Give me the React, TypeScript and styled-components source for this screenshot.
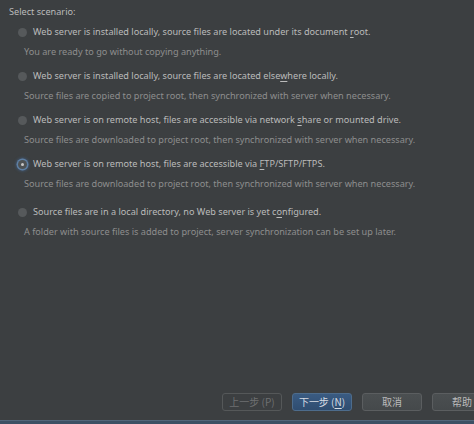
import React from "react";
import styled, { createGlobalStyle } from "styled-components";

const Global = createGlobalStyle`
  html, body { margin: 0; padding: 0; overflow: hidden; background: #3c3f41; }
  #root { height: 100vh; }
`;

const Dialog = styled.div`
  height: 100%;
  display: flex;
  flex-direction: column;
  background: #3c3f41;
  font-family: "Noto Sans", "Noto Sans CJK SC", sans-serif;
  font-size: 9.15px;
  color: #bbbbbb;
  overflow: hidden;
`;

const Content = styled.div`
  flex: 1;
  display: flex;
  flex-direction: column;
  padding: 2px 0 0 9px;
`;

const Title = styled.div`
  line-height: 20px;
`;

const Group = styled.div<{ $extra?: number }>`
  display: flex;
  flex-direction: column;
  margin-top: ${(p) => p.$extra ?? 0}px;
  margin-bottom: 4px;
`;

const OptionRow = styled.label`
  display: flex;
  align-items: center;
  gap: 6px;
  line-height: 20px;
  padding-left: 9px;
  white-space: nowrap;
  cursor: default;
`;

const Radio = styled.span<{ $checked?: boolean }>`
  box-sizing: border-box;
  width: 9px;
  height: 9px;
  border-radius: 50%;
  flex: none;
  background: ${(p) => (p.$checked ? "#4e5254" : "#56595b")};
  box-shadow: ${(p) =>
    p.$checked ? "0 0 0 1.5px #5e7fa3, 0 0 3px 2px rgba(70,110,160,0.6)" : "none"};
  display: flex;
  align-items: center;
  justify-content: center;
  &::after {
    content: "";
    display: ${(p) => (p.$checked ? "block" : "none")};
    width: 3px;
    height: 3px;
    border-radius: 50%;
    background: #c8c8c8;
  }
`;

const Desc = styled.div`
  line-height: 20px;
  padding-left: 15px;
  white-space: nowrap;
  color: #8e8e8e;
`;

const U = styled.span`
  text-decoration: underline;
  text-underline-offset: 2px;
`;

const ButtonBar = styled.div`
  display: flex;
  justify-content: flex-end;
  gap: 10px;
  margin-right: -18px;
  padding-bottom: 9px;
`;

const Button = styled.button<{ $variant?: "default" | "disabled" | "normal" }>`
  box-sizing: border-box;
  width: 60px;
  height: 18px;
  padding: 0;
  font-family: "Noto Sans CJK SC", "Noto Sans", sans-serif;
  font-size: 10px;
  line-height: 16px;
  border-radius: 3px;
  border: 1px solid
    ${(p) =>
      p.$variant === "default" ? "#4d6c8c" : p.$variant === "disabled" ? "#555859" : "#5b5e60"};
  background: ${(p) =>
    p.$variant === "default"
      ? "linear-gradient(#3a5b82, #2f4d70)"
      : p.$variant === "disabled"
      ? "transparent"
      : "linear-gradient(#4b4f51, #45494b)"};
  color: ${(p) =>
    p.$variant === "default" ? "#d6dce3" : p.$variant === "disabled" ? "#6e7072" : "#bbbbbb"};
`;

const StatusStrip = styled.div`
  height: 3px;
  border-top: 1px solid #52667a;
  background: #3c5064;
`;

type Opt = {
  label: React.ReactNode;
  desc: string;
  checked?: boolean;
  extra?: number;
};

const options: Opt[] = [
  {
    label: (
      <>
        Web server is installed locally, source files are located under its document <U>r</U>oot.
      </>
    ),
    desc: "You are ready to go without copying anything.",
  },
  {
    label: (
      <>
        Web server is installed locally, source files are located else<U>w</U>here locally.
      </>
    ),
    desc: "Source files are copied to project root, then synchronized with server when necessary.",
  },
  {
    label: (
      <>
        Web server is on remote host, files are accessible via network <U>s</U>hare or mounted drive.
      </>
    ),
    desc: "Source files are downloaded to project root, then synchronized with server when necessary.",
  },
  {
    label: (
      <>
        Web server is on remote host, files are accessible via <U>F</U>TP/SFTP/FTPS.
      </>
    ),
    desc: "Source files are downloaded to project root, then synchronized with server when necessary.",
    checked: true,
  },
  {
    label: (
      <>
        Source files are in a local directory, no Web server is yet c<U>o</U>nfigured.
      </>
    ),
    desc: "A folder with source files is added to project, server synchronization can be set up later.",
    extra: 4,
  },
];

export default function App() {
  return (
    <>
      <Global />
      <Dialog>
        <Content>
          <Title>Select scenario:</Title>
          {options.map((o, i) => (
            <Group key={i} $extra={o.extra}>
              <OptionRow>
                <Radio $checked={o.checked} />
                <span>{o.label}</span>
              </OptionRow>
              <Desc>{o.desc}</Desc>
            </Group>
          ))}
        </Content>
        <ButtonBar>
          <Button $variant="disabled">上一步 (P)</Button>
          <Button $variant="default">
            下一步 (<U>N</U>)
          </Button>
          <Button $variant="normal">取消</Button>
          <Button $variant="normal">帮助</Button>
        </ButtonBar>
        <StatusStrip />
      </Dialog>
    </>
  );
}
